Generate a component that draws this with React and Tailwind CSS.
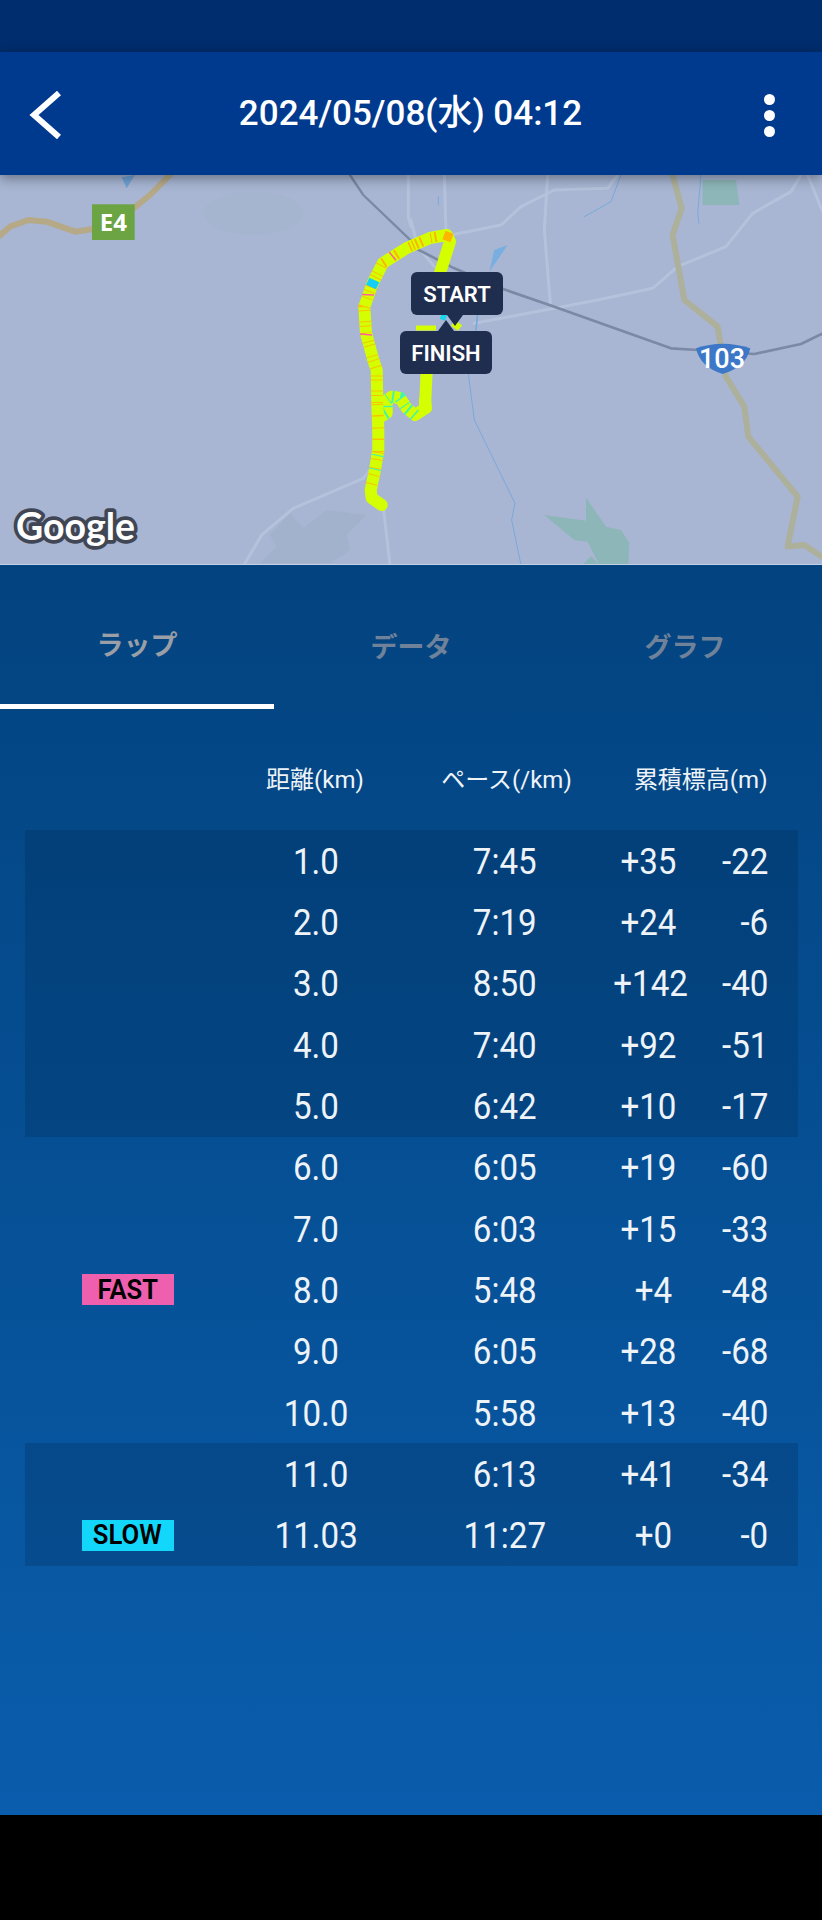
const laps = [
  { group: 0, dist: "1.0", pace: "7:45", up: "+35", down: "-22" },
  { group: 0, dist: "2.0", pace: "7:19", up: "+24", down: "-6" },
  { group: 0, dist: "3.0", pace: "8:50", up: "+142", down: "-40", upClass: "text-center pl-[1px]" },
  { group: 0, dist: "4.0", pace: "7:40", up: "+92", down: "-51" },
  { group: 0, dist: "5.0", pace: "6:42", up: "+10", down: "-17" },
  { group: 1, dist: "6.0", pace: "6:05", up: "+19", down: "-60" },
  { group: 1, dist: "7.0", pace: "6:03", up: "+15", down: "-33" },
  { group: 1, dist: "8.0", pace: "5:48", up: "+4", down: "-48", badge: "FAST", upClass: "text-center pl-[6px]" },
  { group: 1, dist: "9.0", pace: "6:05", up: "+28", down: "-68" },
  { group: 1, dist: "10.0", pace: "5:58", up: "+13", down: "-40" },
  { group: 2, dist: "11.0", pace: "6:13", up: "+41", down: "-34" },
  { group: 2, dist: "11.03", pace: "11:27", up: "+0", down: "-0", badge: "SLOW", upClass: "text-center pl-[6px]" },
]

const rowGrid = "grid grid-cols-[206px_171px_207px_84px_75px] items-center"

function MapDrawing() {
  const road = { fill: "none", strokeLinejoin: "round", strokeLinecap: "round" }
  const route =
    "M381.7 505 L371.7 498 L370.7 490 L375 470 L378.3 450 L378.3 430 L377.3 403 L376.7 370 L373.3 360 L366 333 L364.3 307 L372.7 283 L383 263 L406.7 248 L430 238 L446.7 235 L450 241.7 L440 273"
  return (
    <svg className="absolute inset-0 w-full h-full" viewBox="0 175 822 390">
      <rect x="0" y="175" width="822" height="390" fill="#a8b6d3" />
      <g transform="translate(0 170) scale(0.3333)">
        <ellipse cx="760" cy="130" rx="150" ry="65" fill="#a5b5d0" />
        <polygon points="780,1180 830,1130 810,1095 870,1030 910,1075 980,1020 1100,1035 1040,1095 1050,1140 990,1180" fill="#a2b2cc" />
        <path d="M735 1180 L785 1095 L880 1015 L1090 925 L1125 880" stroke="#b4c2dc" strokeWidth="9" {...road} />
        <path d="M1150 1010 L1170 1185" stroke="#b4c2dc" strokeWidth="9" {...road} />
        <path d="M1225 15 L1225 140 L1233 170" stroke="#b4c2dc" strokeWidth="9" {...road} />
        <polygon points="365,22 405,15 380,55" fill="#6fa3d8" />
        <path d="M-5 200 L30 170 L85 150 L140 155 L225 185 L275 178 L330 160 L400 115 L450 75 L510 15" stroke="#b5a987" strokeWidth="18" {...road} />
        <path d="M1050 15 L1090 75 L1233 212" stroke="#7b89a5" strokeWidth="7" {...road} />
      </g>
      <g transform="translate(411 170) scale(0.3333)">
        <polygon points="875,30 975,30 985,105 875,105" fill="#8db6b8" />
        <polygon points="400,1035 525,1052 525,983 585,1070 630,1080 655,1118 652,1185 565,1185 530,1115 490,1110" fill="#8db6b8" />
        <polygon points="515,1185 540,1158 565,1185" fill="#8db6b8" />
        <path d="M100 15 L105 190" stroke="#b4c2dc" strokeWidth="9" {...road} />
        <path d="M105 198 L270 165 L330 110 L430 60 L590 55 L620 15" stroke="#b4c2dc" strokeWidth="9" {...road} />
        <path d="M410 15 L400 180 L418 400" stroke="#b4c2dc" strokeWidth="9" {...road} />
        <path d="M190 460 L560 390 L725 355 L800 290 L945 230 L1025 130 L1140 65 L1170 15" stroke="#b4c2dc" strokeWidth="9" {...road} />
        <path d="M1190 15 L1233 120" stroke="#b4c2dc" strokeWidth="9" {...road} />
        <path d="M0 150 L20 230 L70 290" stroke="#b4c2dc" strokeWidth="9" {...road} />
        <path d="M520 140 L600 95 L630 15" stroke="#78a9dc" strokeWidth="3" {...road} />
        <path d="M870 15 L860 130 L864 160" stroke="#78a9dc" strokeWidth="3" {...road} />
        <path d="M82 80 L82 105" stroke="#78a9dc" strokeWidth="3" {...road} />
        <path d="M172 610 L190 750 L312 1000 L302 1050 L330 1185" stroke="#78a9dc" strokeWidth="3" {...road} />
        <path d="M200 430 L195 480" stroke="#78a9dc" strokeWidth="5" {...road} />
        <polygon points="235,305 250,240 290,225" fill="#78aee0" />
        <path d="M785 15 L812 115 L785 195 L820 390 L920 470 L945 620 L1000 710 L1012 800 L1160 980 L1130 1130 L1180 1125 L1240 1165" stroke="#adb09a" strokeWidth="18" {...road} />
        <path d="M-5 225 L130 295 L270 355 L430 410 L780 535 L860 540 L1030 552 L1170 522 L1240 488" stroke="#7b89a5" strokeWidth="8" {...road} />
        <path d="M855 535 Q935 508 1018 535 Q1005 592 935 612 Q868 592 855 535 Z" fill="#3d78c8" />
      </g>

      {/* route */}
      <g fill="none">
        <path d="M425 400 L426 408 L415 415 L406.7 408 L400 398 L391.7 396.7 L386.7 400 L386.7 413 L378.3 418" stroke="#d4ff00" strokeWidth="12" strokeLinecap="round" strokeLinejoin="round" />
        <path d="M415 415 L406.7 408 L400 398 L391.7 396.7 L386.7 400 L386.7 413 L378.3 418" stroke="#3ff5b0" strokeWidth="12" strokeDasharray="1.5 6 2 4 1 7" />
        <path d="M428 340 L425 408" stroke="#d4ff00" strokeWidth="12" />
        <path d="M416 328 L436 328" stroke="#d4ff00" strokeWidth="5" />
        <path d="M453 323 L460 328" stroke="#d4ff00" strokeWidth="7" />
        <path d="M441 316 L446 318" stroke="#14d8f0" strokeWidth="6" />
        <path d={route} stroke="#d4ff00" strokeWidth="12" strokeLinecap="round" strokeLinejoin="round" />
        <path d="M377 403 L376.7 370 L373.3 360 L366 333 L364.3 307 L372.7 283 L383 263" stroke="#ffb400" strokeWidth="12" strokeOpacity="0.8" strokeDasharray="1 6 1 3.5 1 10 1 3 1 8" />
        <path d="M383 263 L406.7 248 L430 238 L446.7 235" stroke="#ffb400" strokeWidth="10" strokeDasharray="2 9 1 3 2 14 1.5 2 1.5 2 2 3" />
        <path d="M444 235 L452 238" stroke="#ffb400" strokeWidth="9" />
        <path d="M378.3 452 L378.3 430 L377.3 403" stroke="#ffb400" strokeWidth="12" strokeOpacity="0.8" strokeDasharray="1 11 1.5 10" />
        <path d="M378 452 L375 470 L371 485" stroke="#ffb400" strokeWidth="12" strokeOpacity="0.8" strokeDasharray="1 6 1 8" />
        <path d="M378 455 L375 470" stroke="#3ff5b0" strokeWidth="12" strokeDasharray="1 13" />
        <path d="M374.3 280 L371 287" stroke="#14d0f5" strokeWidth="11" />
        <path d="M362 294.5 L374 295" stroke="#ff5fa0" strokeWidth="1.4" />
        <path d="M360 334 L372 335" stroke="#ff5fa0" strokeWidth="1.4" />
        <path d="M389 252 L396 260" stroke="#ff5fa0" strokeWidth="1.4" />
      </g>

      <rect x="92" y="204.3" width="42.7" height="35.7" fill="#6ca343" />
      <text x="113.3" y="231" textAnchor="middle" fontFamily="'Open Sans', sans-serif" fontWeight="700" fontSize="24" fill="#fff">E4</text>
      <text x="722" y="367.5" textAnchor="middle" fontFamily="Roboto, sans-serif" fontWeight="500" fontSize="27" fill="#fff">103</text>
      <text x="16" y="540" textLength="119" lengthAdjust="spacingAndGlyphs" fontFamily="Lato, sans-serif" fontWeight="700" fontSize="38" fill="#fff" stroke="#404654" strokeWidth="7.5" strokeLinejoin="round" paintOrder="stroke">Google</text>
      <rect x="0" y="564" width="822" height="1" fill="#c4d0e4" />
    </svg>
  )
}

function MapPin({ label, className, up }) {
  return (
    <div className={`absolute h-[43px] w-[92px] flex items-center justify-center pt-[2px] rounded-[6px] bg-[#1f2d4f] text-[22px] font-semibold text-white ${className}`}>
      {label}
      {up ? (
        <span className="absolute left-[38px] top-[-11px] w-0 h-0 border-x-[8px] border-x-transparent border-b-[11px] border-b-[#1f2d4f]" />
      ) : (
        <span className="absolute left-[36px] bottom-[-11px] w-0 h-0 border-x-[8px] border-x-transparent border-t-[11px] border-t-[#1f2d4f]" />
      )}
    </div>
  )
}

function LapRow({ lap }) {
  return (
    <div className={`${rowGrid} h-[61.33px] pt-[2px] text-[36px] text-[#eef3f8]`}>
      <div className="pl-[57px]">
        {lap.badge && (
          <div className={`w-[92px] h-[31px] -mt-[2px] flex items-center justify-center text-[27px] font-semibold text-black ${lap.badge === "FAST" ? "bg-[#ee5fae]" : "bg-[#12d7fb]"}`}>
            <span className="scale-x-95">{lap.badge}</span>
          </div>
        )}
      </div>
      <div className="text-center"><span className="inline-block scale-x-[0.92]">{lap.dist}</span></div>
      <div className="text-center"><span className="inline-block scale-x-[0.92]">{lap.pace}</span></div>
      <div className={lap.upClass || "text-center pr-[4px]"}><span className="inline-block scale-x-[0.92]">{lap.up}</span></div>
      <div className="text-right pl-[1px] -mr-[1px]"><span className="inline-block scale-x-[0.92] origin-right">{lap.down}</span></div>
    </div>
  )
}

export default function App() {
  const groups = [0, 1, 2]
  return (
    <div lang="ja" className="w-[822px] h-[1920px] bg-black flex flex-col font-[Roboto,'Noto_Sans_CJK_JP',sans-serif]">
      <div className="h-[52px] bg-[#002d6e]" />
      <header className="relative z-10 h-[123px] bg-[#003a8f] shadow-[0_3px_12px_rgba(0,0,0,0.4)] flex items-center justify-between pl-[29px] pr-[47px]">
        <svg width="34" height="50" viewBox="0 0 34 50" className="mt-[3px]">
          <path d="M30 3 L5 25 L30 47" fill="none" stroke="#fff" strokeWidth="6" />
        </svg>
        <h1 className="text-[35px] font-medium text-white mt-[2px] mr-[6px]">2024/05/08(水) 04:12</h1>
        <div className="flex flex-col gap-[5px] mt-[3px]">
          <span className="w-[11px] h-[11px] rounded-full bg-white" />
          <span className="w-[11px] h-[11px] rounded-full bg-white" />
          <span className="w-[11px] h-[11px] rounded-full bg-white" />
        </div>
      </header>
      <div className="relative h-[390px] overflow-hidden">
        <MapDrawing />
        <MapPin label="START" className="left-[411px] top-[97px]" />
        <MapPin label="FINISH" up className="left-[400px] top-[156px]" />
      </div>
      <main className="h-[1250px] bg-gradient-to-b from-[#03437f] to-[#0a5dac]">
        <div className="grid grid-cols-3 text-[27px] font-bold">
          <div className="h-[144px] pt-[28px] pb-[5px] flex items-center justify-center border-b-[5px] border-white text-[#9a9ea6]">ラップ</div>
          <div className="h-[144px] pt-[28px] pb-[5px] flex items-center justify-center text-[#6f8299]">データ</div>
          <div className="h-[144px] pt-[28px] pb-[5px] flex items-center justify-center text-[#6f8299]">グラフ</div>
        </div>
        <div className={`${rowGrid} mx-[24.5px] h-[121px] pt-[21px] text-[24px] text-[#eef3f8]`}>
          <div />
          <div className="text-center whitespace-nowrap pr-[2px]">距離(km)</div>
          <div className="text-center whitespace-nowrap pl-[3px]">ペース(/km)</div>
          <div className="col-span-2 text-right whitespace-nowrap">累積標高(m)</div>
        </div>
        <div className="mx-[24.5px]">
          {groups.map((g) => (
            <div key={g} className={g === 1 ? "" : "bg-[#00274f]/25"}>
              {laps.filter((l) => l.group === g).map((lap) => (
                <LapRow key={lap.dist} lap={lap} />
              ))}
            </div>
          ))}
        </div>
      </main>
    </div>
  )
}
